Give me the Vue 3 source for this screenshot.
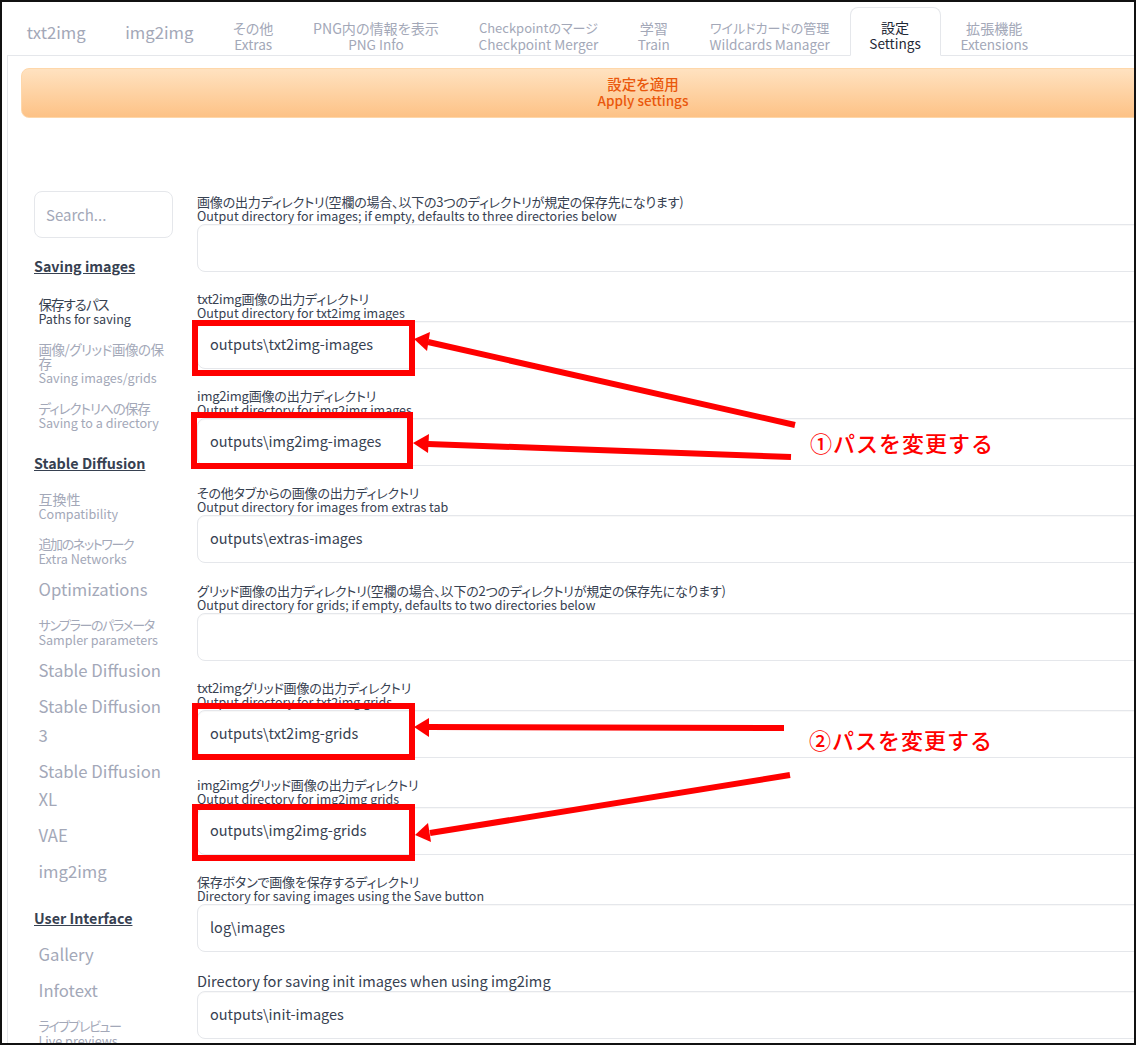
<template>
  <div class="frame">
    <nav class="tabs">
      <div v-for="tab in tabs" :key="tab.en" class="tab" :class="{ active: tab.active, single: !tab.ja }">
        <div v-if="tab.ja" class="tab-ja" :class="{ tight: tab.tight }">{{ tab.ja }}</div>
        <div>{{ tab.en }}</div>
      </div>
    </nav>

    <main class="panel">
      <button class="apply">
        <span class="apply-ja">設定を適用</span>
        <span>Apply settings</span>
      </button>

      <div class="settings">
        <aside class="sidebar">
          <div class="search">Search...</div>
          <template v-for="(item, i) in sideItems" :key="i">
            <div v-if="item.head" class="side-head">{{ item.head }}</div>
            <div v-else-if="item.en" class="side-item double" :class="{ current: item.current }">
              <div class="ja-line" :class="item.kind">{{ item.ja }}</div>
              <div>{{ item.en }}</div>
            </div>
            <div v-else class="side-item">{{ item.text }}</div>
          </template>
        </aside>

        <section class="rows">
          <div v-for="row in rows" :key="row.en" class="row">
            <label class="label" :class="{ single: !row.ja }">
              <div v-if="row.ja" class="label-ja">{{ row.ja }}</div>
              <div>{{ row.en }}</div>
            </label>
            <div class="field">{{ row.value }}</div>
          </div>
        </section>
      </div>
    </main>

    <!-- red annotations drawn over the screenshot -->
    <svg class="marks" width="1136" height="1045" viewBox="0 0 1136 1045">
      <rect v-for="b in boxes" :key="b.y" :x="b.x" :y="b.y" :width="b.w" :height="b.h" fill="none" stroke="#ff0000" stroke-width="6" />
      <g v-for="a in arrows" :key="a.y1">
        <line :x1="a.x1" :y1="a.y1" :x2="a.x2" :y2="a.y2" stroke="#ff0000" stroke-width="6" />
        <polygon :points="a.head" fill="#ff0000" />
      </g>
    </svg>
    <div class="note note-1">①パスを変更する</div>
    <div class="note note-2">②パスを変更する</div>
  </div>
</template>

<script setup>
const tabs = [
  { en: 'txt2img' },
  { en: 'img2img' },
  { ja: 'その他', en: 'Extras' },
  { ja: 'PNG内の情報を表示', en: 'PNG Info' },
  { ja: 'Checkpointのマージ', en: 'Checkpoint Merger', tight: true },
  { ja: '学習', en: 'Train' },
  { ja: 'ワイルドカードの管理', en: 'Wildcards Manager', tight: true },
  { ja: '設定', en: 'Settings', active: true },
  { ja: '拡張機能', en: 'Extensions' }
]

const sideItems = [
  { head: 'Saving images' },
  { ja: '保存するパス', en: 'Paths for saving', current: true },
  { ja: '画像/グリッド画像の保存', en: 'Saving images/grids', kind: 'wrap' },
  { ja: 'ディレクトリへの保存', en: 'Saving to a directory' },
  { head: 'Stable Diffusion' },
  { ja: '互換性', en: 'Compatibility', kind: 'kanji' },
  { ja: '追加のネットワーク', en: 'Extra Networks', kind: 'tight' },
  { text: 'Optimizations' },
  { ja: 'サンプラーのパラメータ', en: 'Sampler parameters', kind: 'tight' },
  { text: 'Stable Diffusion' },
  { text: 'Stable Diffusion 3' },
  { text: 'Stable Diffusion XL' },
  { text: 'VAE' },
  { text: 'img2img' },
  { head: 'User Interface' },
  { text: 'Gallery' },
  { text: 'Infotext' },
  { ja: 'ライブプレビュー', en: 'Live previews', kind: 'tight' }
]

const rows = [
  { ja: '画像の出力ディレクトリ(空欄の場合、以下の3つのディレクトリが規定の保存先になります)', en: 'Output directory for images; if empty, defaults to three directories below', value: '' },
  { ja: 'txt2img画像の出力ディレクトリ', en: 'Output directory for txt2img images', value: 'outputs\\txt2img-images' },
  { ja: 'img2img画像の出力ディレクトリ', en: 'Output directory for img2img images', value: 'outputs\\img2img-images' },
  { ja: 'その他タブからの画像の出力ディレクトリ', en: 'Output directory for images from extras tab', value: 'outputs\\extras-images' },
  { ja: 'グリッド画像の出力ディレクトリ(空欄の場合、以下の2つのディレクトリが規定の保存先になります)', en: 'Output directory for grids; if empty, defaults to two directories below', value: '' },
  { ja: 'txt2imgグリッド画像の出力ディレクトリ', en: 'Output directory for txt2img grids', value: 'outputs\\txt2img-grids' },
  { ja: 'img2imgグリッド画像の出力ディレクトリ', en: 'Output directory for img2img grids', value: 'outputs\\img2img-grids' },
  { ja: '保存ボタンで画像を保存するディレクトリ', en: 'Directory for saving images using the Save button', value: 'log\\images' },
  { en: 'Directory for saving init images when using img2img', value: 'outputs\\init-images' }
]

const boxes = [
  { x: 195, y: 323, w: 217, h: 50 },
  { x: 194, y: 415, w: 216, h: 51 },
  { x: 195, y: 706, w: 217, h: 51 },
  { x: 195, y: 807, w: 217, h: 51 }
]

const arrows = [
  { x1: 795, y1: 425, x2: 428, y2: 342, head: '414,339 430,332 427,351' },
  { x1: 791, y1: 457, x2: 428, y2: 444, head: '413,443 429,434 428,453' },
  { x1: 784, y1: 728, x2: 428, y2: 727, head: '414,727 429,718 429,737' },
  { x1: 790, y1: 775, x2: 430, y2: 833, head: '415,835 428,823 431,842' }
]
</script>

<style scoped>
.frame {
  position: relative;
  width: 1136px;
  height: 1045px;
  box-sizing: border-box;
  border: 2px solid #111;
  overflow: hidden;
  background: #fff;
  font-family: "Noto Sans CJK JP", "Noto Sans", sans-serif;
  font-feature-settings: "palt";
  color: #374151;
}
.tabs {
  display: flex;
  align-items: flex-end;
  height: 53px;
  padding-left: 5px;
}
.tab {
  height: 49px;
  box-sizing: border-box;
  padding: 12px 19.8px 0;
  margin-bottom: -1px;
  border: 1px solid transparent;
  border-width: 1px 0;
  font-size: 13.6px;
  line-height: 16px;
  text-align: center;
  color: #a3a8b8;
  white-space: nowrap;
  position: relative;
}
.tab-ja {
  font-size: 14.1px;
}
.tab-ja.tight {
  font-size: 13px;
}
.tab.single {
  font-size: 16.7px;
  line-height: 24px;
}
.tab.active {
  border: 1px solid #e5e7eb;
  border-bottom-color: #fff;
  border-radius: 8px 8px 0 0;
  background: #fff;
  color: #1f2937;
  padding: 11px 18.8px 0;
  z-index: 1;
}
.panel {
  width: 1400px;
  margin-left: 5px;
  padding: 12px 0 0 13px;
  border-top: 1px solid #e5e7eb;
  border-left: 1px solid #e5e7eb;
}
.apply {
  display: flex;
  flex-direction: column;
  align-items: center;
  justify-content: center;
  width: 1244px;
  height: 50px;
  padding: 0 0 2px;
  border: 1px solid #fed7aa;
  border-radius: 8px;
  background: linear-gradient(to bottom, #ffe2c0, #fdc286);
  font-family: inherit;
  font-feature-settings: inherit;
  font-size: 13.5px;
  line-height: 16px;
  font-weight: 500;
  color: #ea580c;
}
.apply-ja {
  font-size: 14.5px;
}
.settings {
  display: flex;
  margin-top: 73px;
  margin-left: 13px;
}
.sidebar {
  width: 139px;
  flex: none;
  margin-right: 24px;
}
.search {
  height: 47px;
  box-sizing: border-box;
  margin-bottom: 18px;
  padding-left: 11px;
  border: 1px solid #e5e7eb;
  border-radius: 8px;
  font-size: 15px;
  line-height: 45px;
  color: #a3a8b8;
}
.side-head {
  margin: 18px 0 8px;
  font-size: 14.3px;
  line-height: 20px;
  font-weight: 700;
  color: #374151;
  text-decoration: underline;
}
.search + .side-head {
  margin: 0 0 10px;
}
.side-item {
  padding: 4px 0 4px 4.5px;
  font-size: 16.7px;
  line-height: 28.2px;
  color: #a3a8b8;
}
.side-item.double {
  padding: 11px 0 5px 4.5px;
  font-size: 12.6px;
  line-height: 15px;
}
.side-item.double.current {
  color: #374151;
}
.ja-line {
  font-size: 13.5px;
  line-height: 14px;
  letter-spacing: -1px;
  white-space: nowrap;
}
.ja-line.kanji {
  font-size: 14px;
  letter-spacing: 0;
}
.ja-line.tight {
  font-size: 13px;
  letter-spacing: -1.4px;
}
.ja-line.wrap {
  width: 128px;
  white-space: normal;
  letter-spacing: -0.5px;
}
.rows {
  flex: none;
  width: 1100px;
  display: flex;
  flex-direction: column;
  gap: 20.15px;
  padding-top: 4px;
}
.label {
  display: block;
  height: 28px;
  margin-bottom: 1px;
  font-size: 12.5px;
  line-height: 14px;
  color: #374151;
  white-space: nowrap;
}
.label-ja {
  font-size: 13px;
  letter-spacing: -0.2px;
}
.label.single {
  height: 18px;
  font-size: 14.6px;
  line-height: 18px;
}
.field {
  height: 48px;
  box-sizing: border-box;
  padding-left: 12px;
  border: 1px solid #e5e7eb;
  border-radius: 8px;
  box-shadow: inset 0 1px 1px rgba(0, 0, 0, 0.03);
  font-size: 14.5px;
  line-height: 44px;
  color: #374151;
}
.marks {
  position: absolute;
  left: -2px;
  top: -2px;
  pointer-events: none;
}
.note {
  position: absolute;
  font-size: 22px;
  line-height: 28px;
  font-weight: 500;
  font-feature-settings: normal;
  letter-spacing: 1px;
  color: #ff0000;
  white-space: nowrap;
}
.note-1 {
  left: 808px;
  top: 426px;
}
.note-2 {
  left: 807px;
  top: 723px;
}
</style>
